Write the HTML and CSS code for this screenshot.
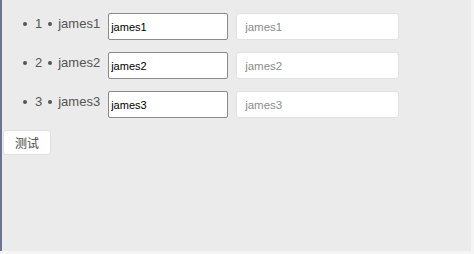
FILE: index.html
```html
<!DOCTYPE html>
<html lang="zh">
<head>
  <meta charset="UTF-8">
  <title>测试</title>
  <link rel="stylesheet" href="styles.css">
</head>
<body>

<div class="app">
  <div class="list">
    <div class="row">
      <span class="dot"></span><span class="num">1</span>
      <span class="dot"></span><span class="name">james1</span>
      <input class="edit" type="text" value="james1">
      <input class="copy" type="text" placeholder="james1">
    </div>
    <div class="row">
      <span class="dot"></span><span class="num">2</span>
      <span class="dot"></span><span class="name">james2</span>
      <input class="edit" type="text" value="james2">
      <input class="copy" type="text" placeholder="james2">
    </div>
    <div class="row">
      <span class="dot"></span><span class="num">3</span>
      <span class="dot"></span><span class="name">james3</span>
      <input class="edit" type="text" value="james3">
      <input class="copy" type="text" placeholder="james3">
    </div>
  </div>
  <button class="btn">测试</button>
</div>

</body>
</html>
```

FILE: styles.css
```css
* {
  box-sizing: border-box;
}

html {
  background: #f5f5f5;
  height: 100%;
}

body {
  margin: 0 3px 0 0;
  height: 251px;
  border-left: 2px solid #6b7391;
  background: #ebebeb;
  font-family: 'Liberation Sans', Arial, 'Noto Sans CJK SC', sans-serif;
  color: #555;
  overflow: hidden;
}

.app {
  display: flex;
  flex-direction: column;
  align-items: flex-start;
  padding-top: 13px;
  gap: 12px;
}

.list {
  display: flex;
  flex-direction: column;
  gap: 12px;
}

.row {
  display: flex;
  align-items: flex-start;
  padding-left: 21px;
  font-size: 13px;
  line-height: 16px;
}

.dot {
  width: 4px;
  height: 4px;
  border-radius: 50%;
  background: #555;
  margin-top: 9px;
}

.num {
  margin: 3px 6px 0 8px;
}

.name {
  margin: 3px 8px 0 6px;
}

.row input {
  height: 27px;
  font-family: 'Liberation Sans', Arial, sans-serif;
  outline: none;
}

.edit {
  width: 120px;
  border: 1px solid #8a8a8a;
  border-radius: 2px;
  padding: 0 2px;
  font-size: 11px;
  color: #000;
  background: #fff;
}

.copy {
  width: 163px;
  margin-left: 8px;
  border: 1px solid #e2e2e2;
  border-radius: 3px;
  padding: 0 8px;
  font-size: 11.5px;
  background: #fff;
}

.copy::placeholder {
  color: #8c8c8c;
}

.btn {
  margin-left: 1px;
  width: 48px;
  height: 25px;
  border: 1px solid #e0e0e0;
  border-radius: 3px;
  background: #fff;
  font-family: 'Noto Sans CJK SC', sans-serif;
  font-size: 12px;
  color: #444;
  padding: 0;
}
```
